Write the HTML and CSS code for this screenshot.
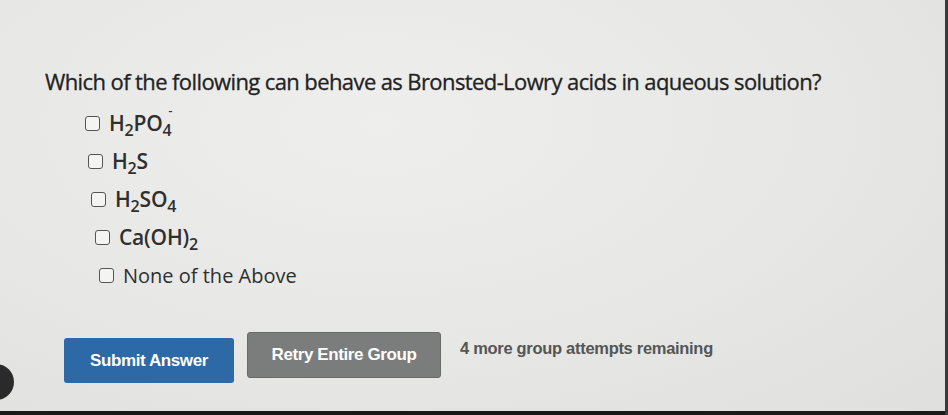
FILE: index.html
```html
<!DOCTYPE html>
<html lang="en">
<head>
<meta charset="utf-8">
<title>Question</title>
<link rel="stylesheet" href="styles.css">
</head>
<body>
<div class="screen">
  <div class="content">
    <p class="question">Which of the following can behave as Bronsted-Lowry acids in aqueous solution?</p>
    <ul class="options">
      <li class="opt o1"><span class="box"></span><span class="chem">H<sub>2</sub>PO<sub class="ion"><sup>-</sup>4</sub></span></li>
      <li class="opt o2"><span class="box"></span><span class="chem">H<sub>2</sub>S</span></li>
      <li class="opt o3"><span class="box"></span><span class="chem">H<sub>2</sub>SO<sub>4</sub></span></li>
      <li class="opt o4"><span class="box"></span><span class="chem">Ca(OH)<sub>2</sub></span></li>
      <li class="opt o5"><span class="box"></span><span class="plain">None of the Above</span></li>
    </ul>
    <div class="actions">
      <button class="btn btn-submit">Submit Answer</button>
      <button class="btn btn-retry">Retry Entire Group</button>
      <span class="remaining">4 more group attempts remaining</span>
    </div>
  </div>
  <div class="side-dot"></div>
  <div class="bottom-bar"></div>
</div>
</body>
</html>
```
FILE: styles.css
```css
html, body {
  margin: 0;
  padding: 0;
}
body {
  width: 948px;
  height: 415px;
  overflow: hidden;
  background: #e4e5e3;
}
.screen {
  position: relative;
  width: 948px;
  height: 415px;
  background: radial-gradient(ellipse at 40% 30%, #eeeeec 0%, #e7e8e6 55%, #dfe0de 100%);
  box-sizing: border-box;
  border-right: 3px solid #3a3a3a;
  overflow: hidden;
}
.content {
  padding: 66px 0 0 45px;
}
.question {
  margin: 0;
  font-family: "Open Sans", sans-serif;
  font-size: 22px;
  line-height: 30px;
  color: #222;
  letter-spacing: -0.6px;
  -webkit-text-stroke: 0.3px #222;
}
.options {
  list-style: none;
  margin: 8px 0 0 0;
  padding: 0;
}
.opt {
  display: flex;
  align-items: center;
  gap: 9px;
  height: 38px;
  font-family: "Open Sans", sans-serif;
  font-size: 20px;
  color: #2f2f2f;
}
.o1 { margin-left: 40px; }
.o2 { margin-left: 43px; }
.o3 { margin-left: 46px; }
.o4 { margin-left: 50px; }
.o5 { margin-left: 54px; }
.box {
  width: 13px;
  height: 13px;
  border: 1.5px solid #555;
  border-radius: 3px;
  background: #f4f4f2;
  flex: none;
}
.chem {
  font-weight: 600;
  font-size: 21px;
  letter-spacing: -0.2px;
}
.chem sub {
  font-size: 16px;
  vertical-align: -5px;
  line-height: 0;
}
.chem sub.ion {
  position: relative;
}
.chem sub.ion sup {
  position: absolute;
  left: 6px;
  top: -8px;
  font-size: 12px;
}
.actions {
  display: flex;
  align-items: center;
  margin: 34px 0 0 19px;
  gap: 0;
}
.btn {
  border: none;
  font-family: "Liberation Sans", Arial, sans-serif;
  font-weight: 700;
  font-size: 17px;
  color: #fff;
  border-radius: 3px;
  letter-spacing: -0.4px;
}
.btn-submit {
  width: 170px;
  height: 45px;
  background: #2d69a7;
  margin-top: 10px;
}
.btn-retry {
  width: 194px;
  height: 46px;
  background: #7b7c7c;
  border: 1px solid #6a6a6a;
  margin-left: 13px;
  margin-top: -2px;
}
.remaining {
  margin-left: 19px;
  margin-top: -14px;
  font-family: "Liberation Sans", Arial, sans-serif;
  font-weight: 700;
  font-size: 16.5px;
  color: #555;
  letter-spacing: -0.3px;
}
.side-dot {
  position: absolute;
  left: -22px;
  top: 364px;
  width: 36px;
  height: 36px;
  border-radius: 50%;
  background: #2a2a2a;
}
.bottom-bar {
  position: absolute;
  left: 0;
  right: 0;
  bottom: 0;
  height: 4px;
  background: #1a1a1a;
}
```
